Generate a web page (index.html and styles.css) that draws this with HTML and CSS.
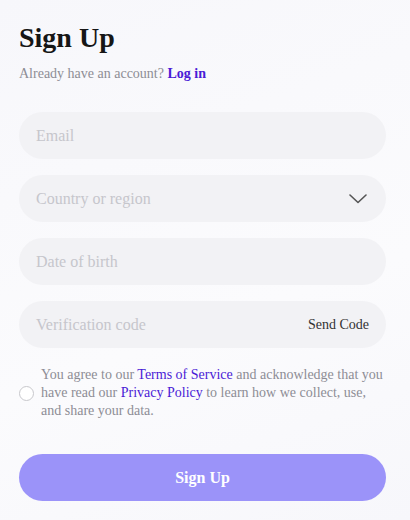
FILE: index.html
```html
<!DOCTYPE html>
<html>
<head>
<meta charset="utf-8">
<link rel="stylesheet" href="styles.css">
</head>
<body>
<div class="page">
  <h1 class="title">Sign Up</h1>
  <p class="sub">Already have an account? <a class="link-strong">Log in</a></p>
  <div class="fields">
    <div class="field"><span class="ph">Email</span></div>
    <div class="field"><span class="ph">Country or region</span>
      <svg class="chev" width="18" height="10" viewBox="0 0 18 10"><path d="M1 1 L9 8.5 L17 1" fill="none" stroke="#555" stroke-width="1.6" stroke-linecap="round" stroke-linejoin="round"/></svg>
    </div>
    <div class="field"><span class="ph">Date of birth</span></div>
    <div class="field"><span class="ph">Verification code</span><span class="send">Send Code</span></div>
  </div>
  <div class="agree">
    <span class="radio"></span>
    <p class="agree-text">You agree to our <a class="link">Terms of Service</a> and acknowledge that you have read our <a class="link">Privacy Policy</a> to learn how we collect, use, and share your data.</p>
  </div>
  <button class="btn">Sign Up</button>
</div>
</body>
</html>
```
FILE: styles.css
```css
html, body { margin: 0; padding: 0; }
body {
  background: linear-gradient(160deg, #f7f7fb 0%, #fbfbfd 60%, #f7f7fb 100%);
  font-family: "Liberation Serif", "Times New Roman", serif;
  width: 410px;
  height: 520px;
  overflow: hidden;
}
.page { padding: 20px 24px 0 19px; }
.title {
  margin: 0;
  font-size: 28px;
  font-weight: bold;
  color: #161616;
  line-height: 36px;
}
.sub {
  margin: 9px 0 0;
  font-size: 14px;
  color: #8d8d95;
  line-height: 18px;
}
.link-strong { color: #4a1bd6; font-weight: bold; }
.fields {
  margin-top: 29px;
  display: flex;
  flex-direction: column;
  gap: 16px;
}
.field {
  height: 47px;
  border-radius: 24px;
  background: #f2f2f5;
  display: flex;
  align-items: center;
  justify-content: space-between;
  padding: 0 17px 0 17px;
}
.ph { font-size: 16px; color: #c6c6cc; }
.chev { margin-right: 2px; }
.send { font-size: 14px; color: #333; }
.agree {
  margin-top: 18px;
  display: flex;
  align-items: center;
  gap: 7px;
}
.radio {
  flex: none;
  width: 13px;
  height: 13px;
  border: 1px solid #c8c8cc;
  border-radius: 50%;
  background: #fff;
}
.agree-text {
  margin: 0;
  font-size: 14px;
  line-height: 18px;
  color: #8d8d95;
}
.link { color: #4a1bd6; }
.btn {
  margin-top: 34px;
  width: 367px;
  height: 47px;
  border: none;
  border-radius: 24px;
  background: #9b93f9;
  color: #fff;
  font-family: "Liberation Serif", "Times New Roman", serif;
  font-size: 16px;
  font-weight: bold;
  display: block;
}
```
